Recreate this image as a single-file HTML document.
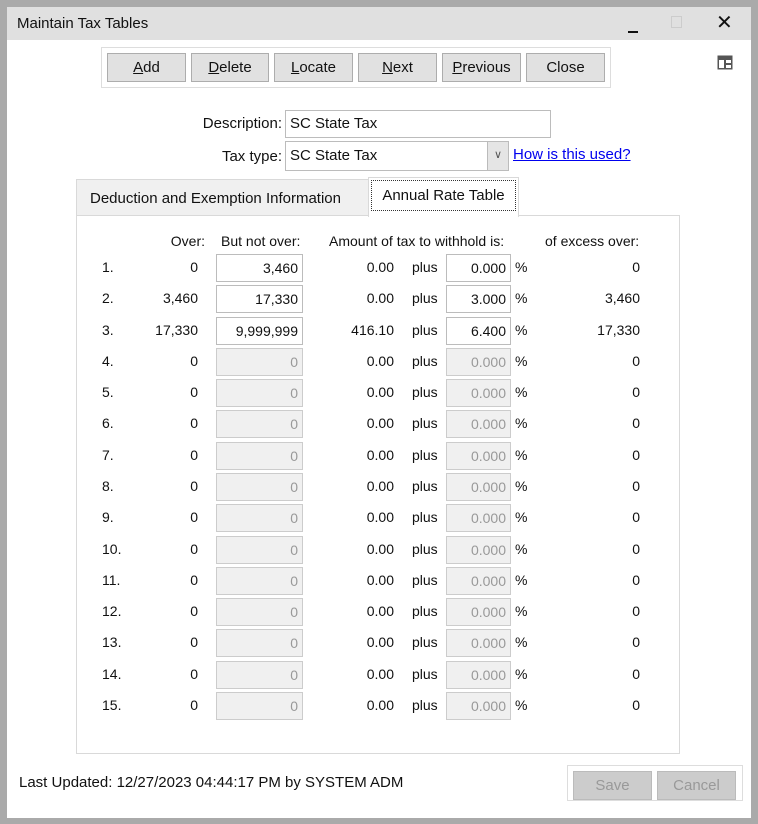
<!DOCTYPE html>
<html><head><style>
*{box-sizing:border-box;margin:0;padding:0}
body{width:758px;height:824px;background:#aaa;font-family:"Liberation Sans",sans-serif;font-size:14px;color:#111;position:relative;overflow:hidden}
.win{position:absolute;left:7px;top:7px;width:744px;height:811px;background:#fff}
.title{position:absolute;left:0;top:0;width:744px;height:33px;background:#e0e0e0}
.a{position:absolute;white-space:nowrap}
.btn{position:absolute;height:29px;background:#e1e1e1;border:1px solid #adadad;text-align:center;line-height:27px;font-size:15px}
.inp{position:absolute;border:1px solid #bcbcbc;background:#fff;height:28px;line-height:26px;padding:0 4px}
.r{text-align:right}
.dis{background:#f0f0f0;color:#999;border-color:#ccc}
</style></head><body>
<div class="win">
<div class="title"><div class="a" style="left:10px;top:8px;font-size:15px">Maintain Tax Tables</div>
<div class="a" style="left:621px;top:24px;width:10px;height:2px;background:#111"></div>
<div class="a" style="left:664px;top:9px;width:11px;height:12px;border:1px solid #ccc"></div>
<div class="a" style="left:709px;top:3px;font-size:20px">✕</div></div>
</div>
<div class="a" style="left:101px;top:47px;width:510px;height:41px;border:1px solid #ddd"></div>
<div class="btn" style="left:107px;top:53px;width:79px"><u>A</u>dd</div>
<div class="btn" style="left:191px;top:53px;width:78px"><u>D</u>elete</div>
<div class="btn" style="left:274px;top:53px;width:79px"><u>L</u>ocate</div>
<div class="btn" style="left:358px;top:53px;width:79px"><u>N</u>ext</div>
<div class="btn" style="left:442px;top:53px;width:79px"><u>P</u>revious</div>
<div class="btn" style="left:526px;top:53px;width:79px">Close</div>
<svg class="a" style="left:717px;top:55px" width="16" height="15"><rect x="0.5" y="0.5" width="15" height="14" fill="#555"/><rect x="2" y="5" width="5" height="8" fill="#fff"/><rect x="9" y="5" width="5" height="3" fill="#fff"/><rect x="9" y="10" width="5" height="3" fill="#fff"/></svg>
<div class="a r" style="left:150px;width:132px;top:115px;font-size:15px">Description:</div>
<div class="inp" style="left:285px;top:110px;width:266px;font-size:15px">SC State Tax</div>
<div class="a r" style="left:150px;width:132px;top:148px;font-size:15px">Tax type:</div>
<div class="inp" style="left:285px;top:141px;width:224px;height:30px;line-height:28px;font-size:15px">SC State Tax</div>
<div class="a" style="left:487px;top:142px;width:21px;height:28px;background:#e5e5e5;border-left:1px solid #bbb;text-align:center;line-height:26px;font-size:11px;color:#555">∨</div>
<div class="a" style="left:513px;top:146px;color:#0000ee;text-decoration:underline;font-size:15px">How is this used?</div>
<div class="a" style="left:76px;top:179px;width:293px;height:37px;background:#f0f0f0;border:1px solid #d9d9d9;border-bottom:none;line-height:37px;padding-left:13px;font-size:15px">Deduction and Exemption Information</div>
<div class="a" style="left:76px;top:215px;width:604px;height:539px;border:1px solid #d9d9d9;background:#fff"></div>
<div class="a" style="left:368px;top:177px;width:151px;height:40px;background:#fff;border:1px solid #d9d9d9;border-bottom:none"></div>
<div class="a" style="left:371px;top:180px;width:145px;height:31px;border:1px dotted #333;text-align:center;line-height:30px;font-size:15px">Annual Rate Table</div>
<div class="a r" style="left:100px;width:105px;top:233px">Over:</div>
<div class="a" style="left:221px;top:233px">But not over:</div>
<div class="a" style="left:329px;top:233px">Amount of tax to withhold is:</div>
<div class="a" style="left:545px;top:233px">of excess over:</div>
<div id="rows"></div>
<div class="a" style="left:19px;top:774px;font-size:15px">Last Updated: 12/27/2023 04:44:17 PM by SYSTEM ADM</div>
<div class="a" style="left:567px;top:765px;width:176px;height:36px;border:1px solid #ddd"></div>
<div class="btn" style="left:573px;top:771px;width:79px;color:#999;background:#ccc;border-color:#bbb">Save</div>
<div class="btn" style="left:657px;top:771px;width:79px;color:#999;background:#ccc;border-color:#bbb">Cancel</div>
<script>
var d=[["0","3,460","0.00","0.000","0"],["3,460","17,330","0.00","3.000","3,460"],["17,330","9,999,999","416.10","6.400","17,330"]];
var h="";
for(var i=0;i<15;i++){var y=Math.round(268+i*31.29)-14;var r=d[i]||["0","0","0.00","0.000","0"];var c=i<3?"":" dis";var t=y+5;
h+='<div class="a" style="left:102px;top:'+t+'px">'+(i+1)+'.</div>'+
'<div class="a r" style="left:120px;width:78px;top:'+t+'px">'+r[0]+'</div>'+
'<div class="inp r'+c+'" style="left:216px;top:'+y+'px;width:87px;height:28px">'+r[1]+'</div>'+
'<div class="a r" style="left:320px;width:74px;top:'+t+'px">'+r[2]+'</div>'+
'<div class="a" style="left:412px;top:'+t+'px">plus</div>'+
'<div class="inp r'+c+'" style="left:446px;top:'+y+'px;width:65px;height:28px">'+r[3]+'</div>'+
'<div class="a" style="left:515px;top:'+t+'px">%</div>'+
'<div class="a r" style="left:560px;width:80px;top:'+t+'px">'+r[4]+'</div>';}
document.getElementById("rows").outerHTML=h;
</script>
</body></html>
